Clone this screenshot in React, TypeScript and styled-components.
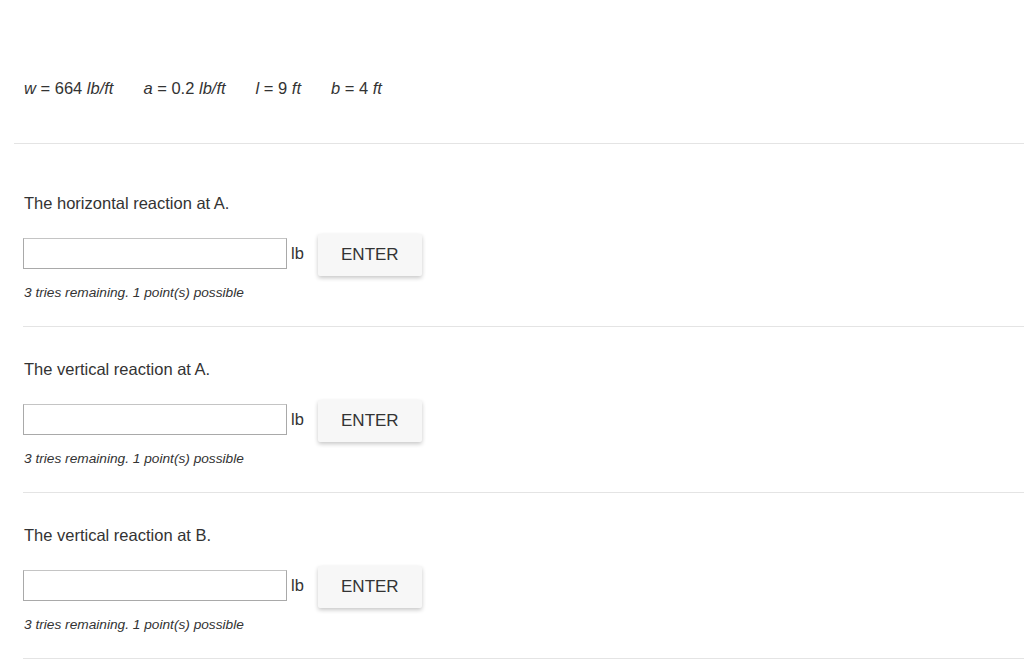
import styled, { createGlobalStyle } from "styled-components"

const GlobalStyle = createGlobalStyle`
  body {
    margin: 0;
    background: #ffffff;
    font-family: "Liberation Sans", Arial, sans-serif;
    color: #333333;
  }
`

const Page = styled.div`
  width: 1024px;
`

const Header = styled.div`
  padding: 79px 0 46px 24px;
  display: flex;
  gap: 30px;
  font-size: 16.5px;
  line-height: 18px;
`

const Param = styled.span`
  white-space: nowrap;
  i {
    font-style: italic;
  }
`

const TopRule = styled.hr`
  margin: 0 0 0 14px;
  border: 0;
  border-top: 1px solid #e4e4e4;
`

const Questions = styled.div`
  padding-top: 17px;
`

const Question = styled.div`
  margin-left: 23px;
  padding: 33px 0 26px 1px;
  border-bottom: 1px solid #e4e4e4;
`

const Prompt = styled.div`
  font-size: 16.5px;
  line-height: 18px;
  margin-bottom: 22px;
`

const AnswerRow = styled.div`
  display: flex;
  align-items: flex-start;
  height: 42px;
`

const Input = styled.input`
  box-sizing: border-box;
  width: 264px;
  height: 31px;
  margin: 4px 0 0 -1px;
  border: 1px solid #a9a9a9;
  border-top-color: #c4c4c4;
  border-radius: 0;
  padding: 0 4px;
  font-size: 16px;
  font-family: inherit;
  outline: none;
`

const Unit = styled.span`
  margin: 10px 14px 0 4px;
  font-size: 16.5px;
  line-height: 18px;
`

const EnterButton = styled.button`
  box-sizing: border-box;
  width: 104px;
  height: 42px;
  border: 0;
  border-radius: 2px;
  background: #f7f7f7;
  box-shadow: 0 2px 4px rgba(0, 0, 0, 0.22);
  font-family: inherit;
  font-size: 17px;
  color: #333333;
  cursor: pointer;
`

const Note = styled.div`
  margin-top: 9px;
  font-size: 13.7px;
  line-height: 15px;
  font-style: italic;
`

const prompts = [
  "The horizontal reaction at A.",
  "The vertical reaction at A.",
  "The vertical reaction at B.",
]

export default function App() {
  return (
    <Page>
      <GlobalStyle />
      <Header>
        <Param>
          <i>w</i> = 664 <i>lb/ft</i>
        </Param>
        <Param>
          <i>a</i> = 0.2 <i>lb/ft</i>
        </Param>
        <Param>
          <i>l</i> = 9 <i>ft</i>
        </Param>
        <Param>
          <i>b</i> = 4 <i>ft</i>
        </Param>
      </Header>
      <TopRule />
      <Questions>
        {prompts.map(p => (
          <Question key={p}>
            <Prompt>{p}</Prompt>
            <AnswerRow>
              <Input type="text" />
              <Unit>lb</Unit>
              <EnterButton type="button">ENTER</EnterButton>
            </AnswerRow>
            <Note>3 tries remaining. 1 point(s) possible</Note>
          </Question>
        ))}
      </Questions>
    </Page>
  )
}
